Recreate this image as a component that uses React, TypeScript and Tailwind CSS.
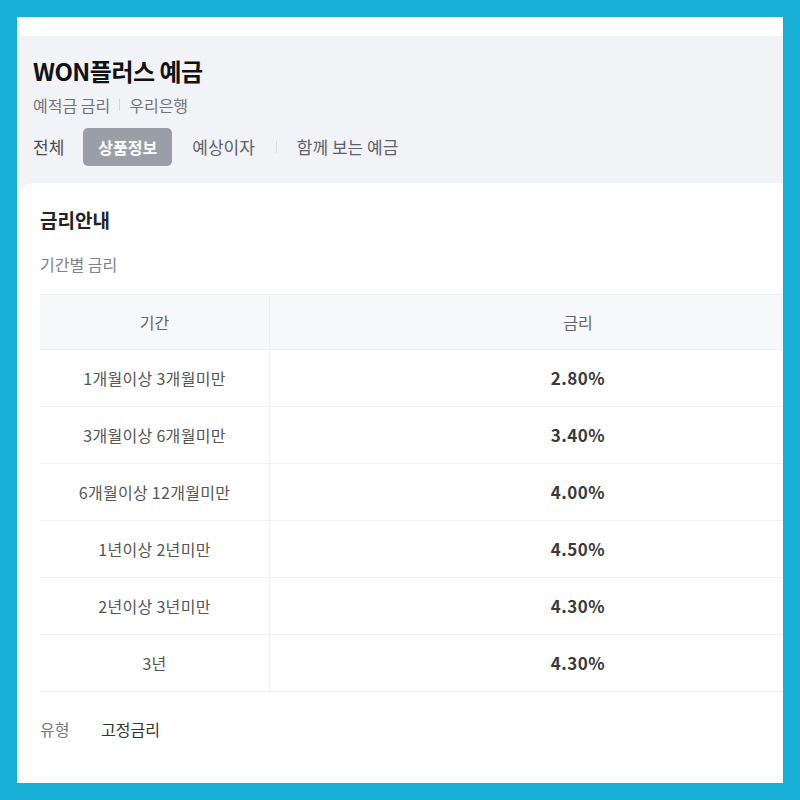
const rows = [
  { term: "1개월이상 3개월미만", rate: "2.80%" },
  { term: "3개월이상 6개월미만", rate: "3.40%" },
  { term: "6개월이상 12개월미만", rate: "4.00%" },
  { term: "1년이상 2년미만", rate: "4.50%" },
  { term: "2년이상 3년미만", rate: "4.30%" },
  { term: "3년", rate: "4.30%" },
];

export default function App() {
  return (
    <div
      className="w-[800px] h-[800px] bg-[#19aed5] p-[17px]"
      style={{ fontFamily: '"Noto Sans CJK KR", "Noto Sans", sans-serif' }}
    >
      <div className="h-full bg-white pt-[19px] flex flex-col overflow-hidden">
        <div className="bg-[#f2f3f6] flex flex-col flex-1 min-h-0">
          <div className="px-[16px] pt-[19px] pb-[17px]">
            <h1 className="text-[24px] leading-[32px] font-bold text-[#111] tracking-[-0.5px]">WON플러스 예금</h1>
            <div className="mt-[7px] flex items-center text-[16px] leading-[22px] text-[#70737a]">
              <span>예적금 금리</span>
              <span className="mx-[9px] h-[12px] w-px bg-[#d4d6da]" />
              <span>우리은행</span>
            </div>
            <div className="mt-[12px] flex items-center text-[17px] text-[#5f6168]">
              <span className="text-[#4a4c52]">전체</span>
              <span className="ml-[19px] h-[38px] w-[89px] rounded-[5px] bg-[#9a9ea7] text-white font-bold text-[16px] flex items-center justify-center">
                상품정보
              </span>
              <span className="ml-[20px]">예상이자</span>
              <span className="ml-[21px] mr-[20px] h-[12px] w-px bg-[#dcdee2]" />
              <span>함께 보는 예금</span>
            </div>
          </div>
          <div className="ml-[3px] flex-1 bg-white rounded-tl-[14px] pl-[20px] pt-[24px] overflow-hidden">
            <h2 className="text-[19px] leading-[26px] font-bold text-[#222]">금리안내</h2>
            <p className="mt-[20px] text-[16px] leading-[22px] text-[#808287]">기간별 금리</p>
            <div className="mt-[19px] w-[846px] border-t border-[#eef0f2]">
              <div className="flex h-[55px] bg-[#f7f8fa] border-b border-[#eef0f2] text-[16px] text-[#666]">
                <div className="w-[230px] flex items-center justify-center border-r border-[#eceef0]">기간</div>
                <div className="flex-1 flex items-center justify-center">금리</div>
              </div>
              {rows.map((r) => (
                <div key={r.term} className="flex h-[57px] border-b border-[#eef0f2]">
                  <div className="w-[230px] flex items-center justify-center border-r border-[#f0f1f3] text-[16px] text-[#555] tracking-[0.3px]">
                    {r.term}
                  </div>
                  <div className="flex-1 flex items-center justify-center text-[17px] font-bold text-[#3a3a3a] tracking-[0.5px]">
                    {r.rate}
                  </div>
                </div>
              ))}
            </div>
            <div className="mt-[26px] flex text-[16px] leading-[22px]">
              <span className="w-[61px] text-[#777]">유형</span>
              <span className="text-[#333]">고정금리</span>
            </div>
          </div>
        </div>
      </div>
    </div>
  );
}
